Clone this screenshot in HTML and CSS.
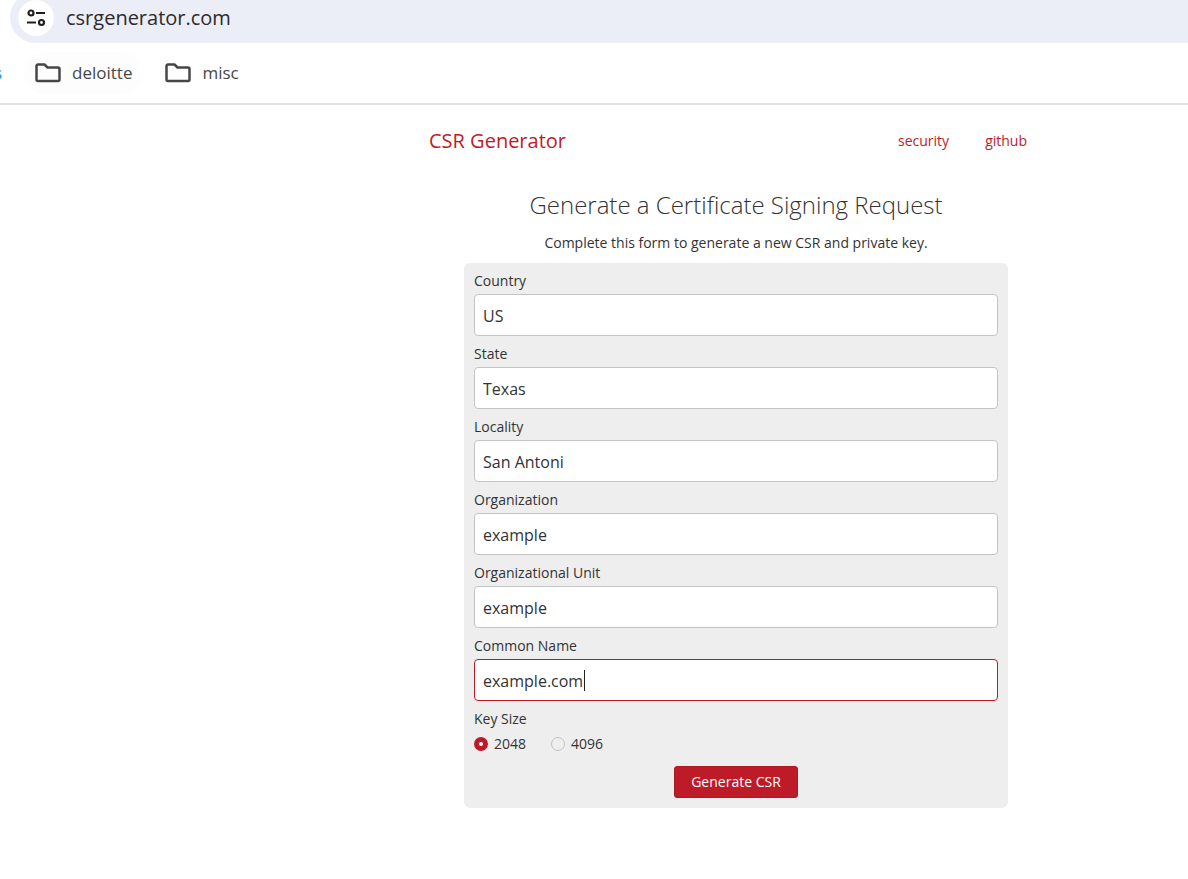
FILE: index.html
```html
<!DOCTYPE html>
<html lang="en">
<head>
    <meta charset="UTF-8">
    <meta name="viewport" content="width=device-width, initial-scale=1">
    <title>CSR Generator</title>
    <link rel="stylesheet" href="styles.css">
</head>

<body>
<div class="browser">
    <div class="address-bar">
        <button class="site-info" type="button" aria-label="View site information">
            <svg width="20" height="20" viewBox="0 0 20 20" fill="none" stroke="#1f1f1f" stroke-width="2.2">
                <circle cx="5" cy="5" r="2.500"/>
                <path d="M10 5h9M1 14.500h9"/>
                <circle cx="15.500" cy="14.500" r="2.500"/>
            </svg>
        </button>
        <span class="url">csrgenerator.com</span>
    </div>
    <nav class="bookmarks">
        <a class="bookmark cut" href="#">s</a>
        <a class="bookmark active" href="#">
            <svg width="26" height="20" viewBox="0 0 26 20" fill="none" stroke="#474747" stroke-width="2.5" stroke-linejoin="round">
                <path d="M3 1.500h6.500l3 3H23a1.500 1.500 0 0 1 1.500 1.500V16.500a1.500 1.500 0 0 1-1.500 1.500H3A1.500 1.500 0 0 1 1.500 16.500V3A1.500 1.500 0 0 1 3 1.500z"/>
            </svg>
            deloitte
        </a>
        <a class="bookmark" href="#">
            <svg width="26" height="20" viewBox="0 0 26 20" fill="none" stroke="#474747" stroke-width="2.5" stroke-linejoin="round">
                <path d="M3 1.500h6.500l3 3H23a1.500 1.500 0 0 1 1.500 1.500V16.500a1.500 1.500 0 0 1-1.500 1.500H3A1.500 1.500 0 0 1 1.500 16.500V3A1.500 1.500 0 0 1 3 1.500z"/>
            </svg>
            misc
        </a>
    </nav>
</div>

<div class="page">
    <div class="container">
        <header class="header">
            <a class="brand" href="#">CSR Generator</a>
            <nav class="links">
                <a href="#">security</a>
                <a href="#">github</a>
            </nav>
        </header>

        <main>
            <h1>Generate a Certificate Signing Request</h1>
            <p class="intro">Complete this form to generate a new CSR and private key.</p>

            <form class="csr-form">
                <div class="field">
                    <label for="country">Country</label>
                    <input type="text" id="country" name="C" value="US">
                </div>
                <div class="field">
                    <label for="state">State</label>
                    <input type="text" id="state" name="ST" value="Texas">
                </div>
                <div class="field">
                    <label for="locality">Locality</label>
                    <input type="text" id="locality" name="L" value="San Antoni">
                </div>
                <div class="field">
                    <label for="organization">Organization</label>
                    <input type="text" id="organization" name="O" value="example">
                </div>
                <div class="field">
                    <label for="unit">Organizational Unit</label>
                    <input type="text" id="unit" name="OU" value="example">
                </div>
                <div class="field current">
                    <label for="common-name">Common Name</label>
                    <input type="text" id="common-name" name="CN" value="example.com">
                    <span class="caret"></span>
                </div>
                <fieldset class="key-size">
                    <legend>Key Size</legend>
                    <div class="options">
                        <label><input type="radio" name="keysize" value="2048" checked>2048</label>
                        <label><input type="radio" name="keysize" value="4096">4096</label>
                    </div>
                </fieldset>
                <button class="submit" type="submit">Generate CSR</button>
            </form>
        </main>
    </div>
</div>
</body>
</html>
```
FILE: styles.css
```css
* {
    box-sizing: border-box;
}

body {
    margin: 0;
    background: #fff;
    color: #333;
    font-family: "Segoe UI", "Open Sans", "Noto Sans", sans-serif;
    font-size: 14px;
    line-height: 20px;
}

a {
    color: #be1b28;
    text-decoration: none;
}

/* browser bars */
.browser {
    border-bottom: 2px solid #e1e1e1;
    overflow: hidden;
}

.address-bar {
    display: flex;
    align-items: center;
    gap: 12px;
    height: 51px;
    margin: -8px 0 0 10px;
    padding-left: 8px;
    border-radius: 26px 0 0 26px;
    background: #ebeef7;
}

.site-info {
    display: flex;
    align-items: center;
    justify-content: center;
    width: 36px;
    height: 36px;
    padding: 0;
    border: 0;
    border-radius: 50%;
    background: #fff;
}

.url {
    color: #2b2b2b;
    font-size: 20px;
}

.bookmarks {
    display: flex;
    gap: 12px;
    padding: 9px 24px 9px 0;
}

.bookmark {
    display: flex;
    align-items: center;
    gap: 11px;
    height: 42px;
    padding: 0 10px 0 11px;
    border-radius: 21px;
    color: #474747;
    font-size: 17px;
}

.bookmark.active {
    background: #fdfdfd;
}

/* scrolled almost out of view on the left */
.bookmark.cut {
    justify-content: flex-end;
    width: 12px;
    padding: 0 10px 0 0;
    color: #1a8fe3;
}

/* page */
.page {
    padding-left: 284px;
}

.container {
    max-width: 614px;
    margin: 0 auto;
}

.header {
    display: flex;
    align-items: center;
    justify-content: space-between;
    height: 72px;
}

.brand {
    font-size: 20px;
}

.links {
    display: flex;
    gap: 36px;
    padding-right: 16px;
}

h1 {
    margin: 12px 0;
    font-size: 24px;
    font-weight: 300;
    line-height: 32px;
    text-align: center;
}

.intro {
    margin: 0 0 10px;
    text-align: center;
}

.csr-form {
    display: flex;
    flex-direction: column;
    margin: 0 35px;
    padding: 8px 10px 10px;
    border-radius: 6px;
    background: #eee;
}

.field {
    position: relative;
    margin-bottom: 8px;
}

.field label {
    display: block;
    margin-bottom: 3px;
}

.field input {
    display: block;
    width: 100%;
    height: 42px;
    padding: 2px 8px 0;
    border: 1px solid #c4c4c4;
    border-radius: 4px;
    outline: 0;
    background: #fff;
    color: #333;
    font: inherit;
    font-size: 16px;
}

.field input:focus,
.current input {
    border-color: #be1b28;
}

.caret {
    position: absolute;
    bottom: 10px;
    left: 110px;
    width: 1px;
    height: 21px;
    background: #222;
}

.key-size {
    margin: 0 0 12px;
    padding: 0;
    border: 0;
}

.key-size legend {
    padding: 0;
}

.options {
    display: flex;
    gap: 25px;
    padding-top: 5px;
}

.options label {
    display: flex;
    align-items: center;
    gap: 6px;
}

.options input {
    appearance: none;
    width: 14px;
    height: 14px;
    margin: 0;
    border: 1px solid #c4c4c4;
    border-radius: 50%;
}

.options input:checked {
    border: 5px solid #be1b28;
    background: #fff;
}

.submit {
    align-self: center;
    height: 32px;
    padding: 0 16px;
    border: 1px solid #ab1824;
    border-radius: 3px;
    background: #be1b28;
    color: #fff;
    font: inherit;
}
```
